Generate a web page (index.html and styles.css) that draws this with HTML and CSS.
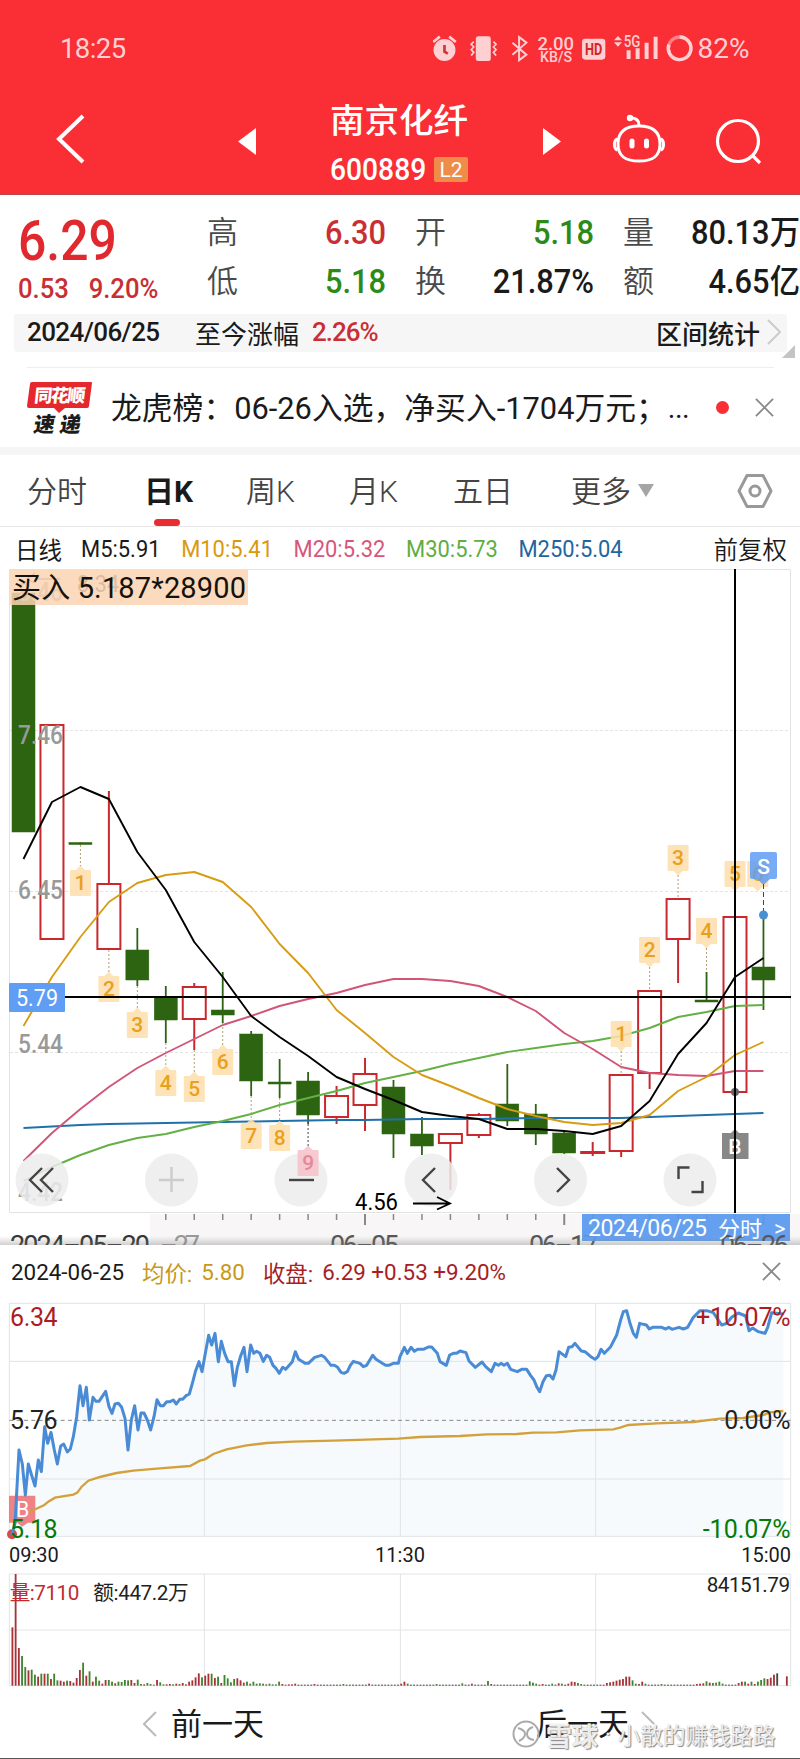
FILE: index.html
```
<!DOCTYPE html>
<html lang="zh-CN">
<head>
    <meta charset="UTF-8">
    <title>南京化纤 600889</title>
    <link rel="stylesheet" href="styles.css">
</head>
<body>
<div id="page">
    <div id="header">
        <div class="status">
            <span class="time">18:25</span>
            <svg class="status-icons" viewBox="100 95 960 100">
                <g fill="#ffd0d2" stroke="none">
                    <circle cx="134" cy="149" r="33"/>
                    <path d="M100 125l20-16M168 125l-20-16" stroke="#ffd0d2" stroke-width="8"/>
                    <path d="M134 134v20l10 6" stroke="#c23a40" stroke-width="8" fill="none"/>
                    <rect x="228" y="108" width="45" height="74" rx="7"/>
                    <path d="M222 124l-8 8 8 8-8 8 8 8-8 10M281 124l8 8-8 8 8 8-8 8 8 10" fill="none" stroke="#ffd0d2" stroke-width="5"/>
                    <path d="M338 127l42 36-22 17v-70l22 17-42 36" fill="none" stroke="#ffd0d2" stroke-width="6"/>
                    <text x="413" y="148" font-size="55" font-weight="500" textLength="110" lengthAdjust="spacingAndGlyphs">2.00</text>
                    <text x="421" y="186" font-size="45" font-weight="500" textLength="96" lengthAdjust="spacingAndGlyphs">KB/S</text>
                    <rect x="547" y="115" width="70" height="63" rx="10"/>
                    <text x="556" y="163" font-size="48" font-weight="700" fill="#d3262c" textLength="52" lengthAdjust="spacingAndGlyphs">HD</text>
                    <path d="M643 120l12-13 12 13zM643 126l12 13 12-13z"/>
                    <text x="672" y="139" font-size="47" font-weight="500" textLength="50" lengthAdjust="spacingAndGlyphs">5G</text>
                    <path d="M681 150h12v26h-12zM708 144h12v32h-12zM735 127h12v49h-12zM762 109h12v67h-12z"/>
                    <circle cx="840" cy="144" r="34" fill="none" stroke="#ff8187" stroke-width="10"/>
                    <path d="M840 110a34 34 0 1 1-32 23" fill="none" stroke="#ffd0d2" stroke-width="10"/>
                    <text x="894" y="174" font-size="83" textLength="156" lengthAdjust="spacingAndGlyphs">82%</text>
                </g>
            </svg>
        </div>
        <div class="nav">
            <svg class="back" viewBox="0 0 30 50"><path d="M27 2L3 25l24 23"/></svg>
            <svg class="prev" viewBox="0 0 18 27"><path d="M18 0v27L0 13.500z"/></svg>
            <div class="title">
                <div class="name">南京化纤</div>
                <div class="code"><span>600889</span><span class="l2">L2</span></div>
            </div>
            <svg class="next" viewBox="0 0 18 27"><path d="M0 0v27l18-13.500z"/></svg>
            <svg class="robot" viewBox="0 0 54 50">
                <path d="M27 12c13 0 21 5 21 18s-8 17-21 17S6 43 6 30s8-18 21-18z"/>
                <path d="M5.500 25c-4 1-4 10 0 11M48.500 25c4 1 4 10 0 11M27 11c0-5-3-7-8-7"/>
                <path d="M20 27v5M34.500 27v5" class="eye"/>
                <circle cx="18" cy="4" r="3.200" fill="#fff" stroke="none"/>
            </svg>
            <svg class="search" viewBox="0 0 48 48"><circle cx="23" cy="23" r="20.500"/><path d="M37 37l8 8"/></svg>
        </div>
    </div>

    <div id="quote">
        <div class="last">
            <div class="price">6.29</div>
            <div class="change"><span>0.53</span><span>9.20%</span></div>
        </div>
        <div class="stats">
            <span>高</span><b class="up">6.30</b><span>开</span><b class="down">5.18</b><span>量</span><b>80.13<i>万</i></b>
            <span>低</span><b class="down">5.18</b><span>换</span><b>21.87%</b><span>额</span><b>4.65<i>亿</i></b>
        </div>
    </div>

    <div id="range">
        <span class="date">2024/06/25</span>
        <span class="label">至今涨幅</span>
        <span class="rate">2.26%</span>
        <span class="count">区间统计</span>
        <svg class="more" viewBox="0 0 14 26"><path d="M1 1l12 12L1 25"/></svg>
        <i class="corner"></i>
    </div>

    <div id="news">
        <svg class="logo" viewBox="0 0 66 56">
            <path d="M5 2h59q1 0 1 1l-3 23q0 2-2 2H38l-6 5-5-5H2q-2 0-2-2L3 4q0-2 2-2z" fill="#e5282e"/>
            <text x="7" y="22" fill="#fff" font-size="18" font-weight="900" textLength="51" transform="skewX(-6) translate(2 0)">同花顺</text>
            <text x="7" y="52" fill="#1c1c1c" font-size="21" font-weight="900" textLength="47" transform="skewX(-10) translate(8 0)">速递</text>
        </svg>
        <p>龙虎榜：06-26入选，净买入-1704万元；</p>
        <span class="dots">...</span>
        <i class="dot"></i>
        <svg class="close" viewBox="0 0 20 20"><path d="M1 1l18 18M19 1L1 19"/></svg>
    </div>

    <ul id="tabs">
        <li>分时</li>
        <li class="selected">日K</li>
        <li>周K</li>
        <li>月K</li>
        <li>五日</li>
        <li>更多<i></i></li>
        <li class="setting"><svg viewBox="0 0 36 36"><path d="M10 2.500h16l8 15.500-8 15.500H10L2 18z"/><circle cx="18" cy="18" r="5"/></svg></li>
    </ul>

    <div id="ma">
        <span class="cn">日线</span>
        <div class="values">
            <span>M5:5.91</span>
            <span class="m10">M10:5.41</span>
            <span class="m20">M20:5.32</span>
            <span class="m30">M30:5.73</span>
            <span class="m250">M250:5.04</span>
        </div>
        <span class="cn fq">前复权</span>
    </div>

    <svg id="kline" viewBox="0 569 800 676">
        <defs>
            <linearGradient id="shade" x1="0" y1="0" x2="0" y2="1">
                <stop offset="0" stop-color="#888" stop-opacity="0"/>
                <stop offset="1" stop-color="#777" stop-opacity=".35"/>
            </linearGradient>
        </defs>
        <rect x="150" y="1214" width="650" height="31" fill="#f8f6f6"/>
        <path class="frame" d="M9.500 570V1212.500H790.500V570M9.500 569.500H790.500"/>
        <path class="grid" d="M10 730.500H790M10 891.500H790M10 1052.500H790"/>
        <g id="candles"></g>
        <g id="lines"></g>
        <g class="axis">
            <text x="18" y="601" textLength="45" lengthAdjust="spacingAndGlyphs">8.46</text>
            <text x="18" y="744" textLength="45" lengthAdjust="spacingAndGlyphs">7.46</text>
            <text x="18" y="899" textLength="45" lengthAdjust="spacingAndGlyphs">6.45</text>
            <text x="18" y="1053" textLength="45" lengthAdjust="spacingAndGlyphs">5.44</text>
            <text x="18" y="1201" textLength="45" lengthAdjust="spacingAndGlyphs">4.42</text>
        </g>
        <text x="77" y="592" font-size="23" fill="#333" textLength="42" lengthAdjust="spacingAndGlyphs">8.34</text>
        <path d="M60 579H35M35 573l-8 6 8 4" stroke="#333" fill="none"/>
        <!-- 操作按钮 -->
        <g class="btn">
            <circle cx="42" cy="1180" r="26.500"/><circle cx="171.500" cy="1180" r="26.500"/><circle cx="301" cy="1180" r="26.500"/>
            <circle cx="431" cy="1180" r="26.500"/><circle cx="560.500" cy="1180" r="26.500"/><circle cx="690" cy="1180" r="26.500"/>
            <path d="M42 1168l-12 12 12 12M53 1168l-12 12 12 12"/>
            <path class="off" d="M159 1180h25M171.500 1167v25"/>
            <path d="M289 1180h25"/>
            <path d="M435 1168l-12 12 12 12M557 1168l12 12-12 12"/>
            <path d="M678.500 1179v-11.500h11M702.500 1181v11h-11"/>
        </g>
        <g id="badges"></g>
        <!-- 买卖点 -->
        <rect x="750" y="852" width="27" height="27" rx="2" fill="#5f9cf3" opacity=".85"/>
        <path d="M757 879h13l-6.500 6z" fill="#5f9cf3" opacity=".85"/>
        <text x="763.500" y="873.500" class="mark">S</text>
        <path d="M763.500 884v27" stroke="#444" stroke-dasharray="5 3"/>
        <circle cx="763.500" cy="915" r="4.500" fill="#4a90d0"/>
        <path d="M722 1133h9l4-4 4 4h9.500v26H722z" fill="#7b7b7b" opacity=".9"/>
        <text x="735" y="1154" class="mark">B</text>
        <circle cx="735" cy="1092" r="4" fill="#666"/>
        <!-- 十字光标 -->
        <path d="M65 997H791M735 569V1213" stroke="#000" stroke-width="2"/>
        <rect x="9" y="983" width="56" height="29" rx="1" fill="#609df4"/>
        <text x="16" y="1006" font-size="24" fill="#fff" textLength="42" lengthAdjust="spacingAndGlyphs">5.79</text>
        <rect x="10" y="570" width="238" height="35" fill="#fad4b3" opacity=".85"/>
        <text x="12" y="598" font-size="29" fill="#15110c" textLength="234">买入 5.187*28900</text>
        <text x="355" y="1210" font-size="23" fill="#000" textLength="43" lengthAdjust="spacingAndGlyphs">4.56</text>
        <path d="M413 1203.500h37M437 1197l13 6.500-13 6" stroke="#000" stroke-width="1.800" fill="none"/>
        <g id="ticks"></g>
        <g class="days">
            <text x="10" y="1255" textLength="140" fill="#333">2024–05–20</text>
            <text x="160" y="1255" textLength="40" class="faint">–27</text>
            <text x="330" y="1255" textLength="69">06–05</text>
            <text x="529" y="1255" textLength="69">06–17</text>
        </g>
        <rect x="582" y="1214" width="208" height="27" fill="#5b9aef" opacity=".94"/>
        <g class="days"><text x="720" y="1255" textLength="69">06–26</text></g>
        <text x="588" y="1236" font-size="23" fill="#fff" textLength="119">2024/06/25</text>
        <text x="718" y="1237" font-size="22" fill="#fff">分时</text>
        <text x="774" y="1236" font-size="22" fill="#fff">&gt;</text>
        <rect x="0" y="1236" width="800" height="9" fill="url(#shade)"/>
    </svg>

    <div id="dayinfo">
        <span>2024-06-25</span>
        <span class="avg">均价:</span><span class="avg num">5.80</span>
        <span class="close-price">收盘:</span><span class="close-price num">6.29 +0.53 +9.20%</span>
        <svg class="close" viewBox="0 0 20 20"><path d="M1 1l18 18M19 1L1 19"/></svg>
    </div>

    <svg id="minute" viewBox="0 180 2400 735">
        <path id="area" fill="#f6fafd"/>
        <path class="frame" d="M28 190H2372V889H28zM28 364H2372M28 717H2372M613 190V889M1201 190V889M1787 190V889"/>
        <path d="M28 541H2372" stroke="#888" stroke-width="3" stroke-dasharray="12 10"/>
        <path d="M27 769q0-2 2-2h75q2 0 2 2v79H84l-18 12-14-12H27z" fill="#ee6468" opacity=".8"/>
        <text x="48" y="832" font-size="64" fill="#fff">B</text>
        <circle cx="36" cy="883" r="15" fill="#d94b50"/>
        <polyline id="avgline" fill="none" stroke="#d3a03a" stroke-width="7" points="88,816 133,795 145,785 165,773 220,764 232,758 245,740 265,722 300,711 350,699 400,692 480,685 570,678 600,662 615,658 640,642 680,628 740,616 800,609 880,605 1000,602 1195,596 1260,591 1380,588 1460,583 1550,582 1600,578 1670,577 1740,571 1840,568 1860,563 1885,555 1970,550 2080,546 2160,536 2230,534 2290,525 2310,517 2350,513"/>
        <polyline id="priceline" fill="none" stroke="#4a8bd6" stroke-width="9" stroke-linejoin="round" points="35,885 45,850 57,630 67,672 76,765 85,672 95,706 105,738 115,660 124,695 134,560 143,610 153,577 163,630 172,672 182,618 191,612 202,636 211,627 220,590 230,530 240,437 249,497 259,442 268,540 279,472 288,484 297,484 317,454 327,500 336,520 345,492 355,490 365,502 375,535 384,630 394,540 404,497 414,570 423,519 432,519 442,540 452,570 462,530 471,479 481,497 490,497 500,485 510,485 520,480 529,492 539,478 548,478 558,467 568,462 577,430 587,392 597,365 606,395 616,340 626,286 635,315 645,280 655,365 664,304 674,340 684,365 694,365 703,437 712,382 722,348 732,322 741,395 752,315 761,340 770,334 780,340 790,364 800,346 809,352 819,376 828,385 838,400 848,382 857,388 877,365 886,335 896,358 915,370 925,370 944,352 964,346 974,352 993,376 1003,376 1013,382 1023,397 1032,400 1042,395 1051,376 1060,364 1080,370 1090,380 1100,376 1118,346 1128,358 1147,370 1157,376 1166,376 1180,370 1195,370 1200,350 1213,322 1222,340 1233,322 1243,334 1253,328 1270,328 1285,321 1295,321 1312,340 1320,365 1339,376 1349,345 1360,340 1370,340 1380,333 1398,338 1407,363 1426,382 1446,366 1457,380 1474,395 1485,370 1495,376 1503,370 1512,376 1522,370 1532,388 1552,395 1565,388 1580,388 1592,407 1602,420 1611,442 1619,455 1629,425 1639,407 1650,406 1659,417 1668,390 1677,335 1697,350 1706,322 1716,320 1725,310 1744,333 1755,335 1775,352 1785,358 1794,350 1803,328 1813,340 1832,320 1850,285 1862,240 1870,215 1880,212 1890,250 1900,280 1909,292 1919,250 1930,253 1939,255 1948,267 1958,262 1985,262 1997,267 2006,262 2016,268 2037,262 2050,267 2063,262 2080,232 2100,212 2120,212 2140,218 2165,255 2180,250 2195,232 2215,219 2237,228 2247,272 2258,264 2275,275 2295,280 2303,262 2315,218 2350,222"/>
        <g font-size="75">
            <text x="30" y="258" fill="#ae1c22" textLength="143">6.34</text>
            <text x="30" y="566" fill="#222" textLength="143">5.76</text>
            <text x="30" y="895" fill="#067a06" textLength="143">5.18</text>
            <text x="2088" y="258" fill="#ae1c22" textLength="284">+10.07%</text>
            <text x="2173" y="566" fill="#222" textLength="199">0.00%</text>
            <text x="2108" y="895" fill="#067a06" textLength="264">-10.07%</text>
        </g>
    </svg>

    <div id="times"><span>09:30</span><span>11:30</span><span>15:00</span></div>

    <svg id="volume" viewBox="0 40 2400 342">
        <path class="frame" d="M28 43H2372V378H28zM28 211H2372M613 43V378M1201 43V378M1787 43V378"/>
        <g id="bars"></g>
        <g font-size="62">
            <text x="29" y="120" fill="#c02a30" textLength="209">量:7110</text>
            <text x="280" y="120" fill="#222" textLength="286">额:447.2万</text>
            <text x="2120" y="98" fill="#222" textLength="250">84151.79</text>
        </g>
    </svg>

    <div id="pager">
        <svg viewBox="0 0 14 26"><path d="M13 1L1 13l12 12"/></svg>
        <span>前一天</span>
        <span class="after">后一天</span>
        <svg viewBox="0 0 14 26"><path d="M1 1l12 12"/></svg>
        <div class="watermark">
            <svg viewBox="0 0 28 28"><circle cx="14" cy="14" r="12.500"/><path d="M6 8q7 2 7 6t-6 7M21 7q-6 2-6 7t7 6"/></svg>
            <b>雪球</b><em>·</em><span>小散的赚钱路路</span>
        </div>
    </div>
</div>
<script>
    function px(i){
        return 23.5+i*28.46;
    }
    // 涨跌, 实体上, 实体下, 影线上, 影线下
    var aCandle=[
        ['g',593,832,593,832],['r',725,939,725,939],['g',842.5,844.5,843,844],['r',884,949,791,949],
        ['g',950,980,928,986],['g',998,1020,986,1043],['r',987,1019,983,1050],['g',1010,1015,972,1023],
        ['g',1034,1081,1031,1096],['g',1082,1084,1059,1098],['g',1081,1115,1072,1124],['r',1096,1117,1086,1124],
        ['r',1074,1105,1058,1131],['g',1087,1134,1080,1158],['g',1134,1146,1117,1155],['r',1134,1143,1134,1190],
        ['r',1115,1135,1113,1138],['g',1104,1121,1064,1126],['g',1114,1134,1104,1145],['g',1133,1153,1130,1154],
        ['r',1152,1153,1142,1156],['r',1075,1151,1075,1157],['r',991,1073,991,1089],['r',899,939,899,983],
        ['g',1000,1002,972,1001],['r',917,1092,917,1092],['g',967,980,915,1010]
    ];
    var str='';
    for(var i=0;i<aCandle.length;i++){
        var c=aCandle[i],x=px(i);
        var cls=c[0]=='r'?'rise':'fall';
        str+='<path class="'+cls+'" d="M'+x+' '+c[3]+'V'+c[1]+'M'+x+' '+c[2]+'V'+c[4]+'"/>';
        str+='<rect class="'+cls+'" x="'+(x-11.5)+'" y="'+c[1]+'" width="23" height="'+(c[2]-c[1])+'"/>';
    }
    document.getElementById('candles').innerHTML=str;

    var oLine={
        '#2071a8':[1128,1126.5,1125,1124,1123.5,1123,1122.5,1122,1121.5,1121,1120.5,1120,1120,1119.5,1119,1119,1119,1118.5,1118,1118,1118,1118,1117,1116,1115,1114,1113],
        '#65b045':[1181,1167,1155,1145,1138,1134,1127,1121,1114,1105,1098,1091,1083,1077,1071,1064,1058,1052,1048,1044,1041,1036,1028,1017,1012,1006,1005],
        '#d15577':[1161,1133,1109,1087,1068,1053,1039,1025,1016,1006,999,993,985,979,979,981,986,997,1011,1033,1049,1067,1073,1075,1076,1071,1071],
        '#d79c12':[1026,977,937,902,883,875,872,882,907,944,973,1010,1033,1057,1075,1086,1098,1109,1116,1122,1125,1123,1115,1091,1077,1055,1042],
        '#000':[859,802,787,799,852,890,942,977,1016,1037,1056,1077,1089,1100,1112,1116,1119,1129,1129,1131,1134,1126,1101,1054,1023,977,958]
    };
    str='';
    for(var color in oLine){
        var pts=[];
        for(var i=0;i<27;i++){
            pts.push(px(i)+','+oLine[color][i]);
        }
        str+='<polyline stroke="'+color+'" points="'+pts.join(' ')+'"/>';
    }
    document.getElementById('lines').innerHTML=str;

    // 九转序列: 第几根, 数字, 顶部y, 虚线起点, 虚线终点
    var aBadge=[
        [2,1,867,845,867],[3,2,973,950,973],[4,3,1009,986,1009],[5,4,1067,1043,1067],[6,5,1073,1050,1073],[7,6,1046,1023,1046],
        [8,7,1120,1096,1120],[9,8,1122,1098,1122],[10,9,1147,1124,1147],
        [21,1,1022,1051,1075],[22,2,938,967,991],[23,3,846,875,899],[24,4,919,948,972],[25,5,862,889,917],[25.8,6,862,862,862]
    ];
    str='';
    for(var i=0;i<aBadge.length;i++){
        var b=aBadge[i],x=px(b[0]),y=b[2],up=b[0]<20;
        var pink=b[1]==9;
        var bg=pink?'#f6c3cb':'#fde0ae';
        str+='<path d="M'+x+' '+b[3]+'V'+b[4]+'" stroke="'+(pink?'#444':'#b3a070')+'" stroke-dasharray="2 2"/>';
        str+='<path d="'+(up?'M'+x+' '+y+'l4 4h5.500v24h-19v-24h5.500z':'M'+x+' '+(y+28)+'l4-4h5.500v-24h-19v24h5.500z')+'" fill="'+bg+'" stroke="'+bg+'" stroke-width="2" stroke-linejoin="round" opacity=".88"/>';
        str+='<text x="'+x+'" y="'+(y+(up?23:19))+'" fill="'+(pink?'#e88797':'#eba01b')+'">'+b[1]+'</text>';
    }
    document.getElementById('badges').innerHTML=str;

    str='';
    for(var i=5;i<27;i++){
        var big=(i-12)%7==0&&i>5;
        str+='<path d="M'+px(i)+' 1214V'+(big?1225:1220)+'" stroke="#888" stroke-width="'+(big?2:1.5)+'"/>';
    }
    document.getElementById('ticks').innerHTML=str;

    document.getElementById('area').setAttribute('d','M'+document.getElementById('priceline').getAttribute('points')+' 2350,889 35,889z');

    // 分时成交量
    var sVol='r175 r335 r113 g89 g56 r46 g48 g33 r27 g36 r36 g36 r20 g36 g16 r15 r12 g15 r14 r9 r23 r47 g69 r30 g43 r12 g27 g15 r6 r17 g17 g12 r7 g12 g11 g17 g16 r17 r8 g18 g5 r4 g8 g5 g3 r17 g10 g4 r4 r5 g4 r6 g5 r8 r4 r12 r16 r25 r37 g25 r30 r36 g36 r23 g27 r8 g32 g22 g10 g20 r22 r16 r9 g12 g6 g12 g6 g7 g6 r4 g6 g4 g4 g12 r5 r3 r4 r4 r6';
    var aVol=sVol.split(' ');
    var oVol={94:'r5',103:'g5',111:'r6',121:'r6',122:'r12',123:'g6',132:'g5',140:'g7',143:'r6',148:'g14',149:'r5',161:'g13',162:'g9',163:'g6',165:'r5',168:'g6',170:'r7',171:'g6',173:'r6',174:'r12',175:'r11',176:'g8',177:'g5',185:'r8',186:'r10',187:'r12',188:'r15',189:'r18',190:'r20',191:'r27',192:'r27',193:'g16',194:'g6',195:'r5',196:'r12',197:'g6',202:'g5',213:'r5',214:'r6',215:'r7',216:'g13',217:'r9',218:'g8',219:'g9',220:'g12',221:'g6',226:'r8',227:'r12',228:'g12',229:'r6',230:'g12',231:'r5',232:'g12',233:'g17',234:'g22',235:'r20',236:'r24',237:'r33',238:'k37',241:'r28'};
    str='';
    for(var i=0;i<242;i++){
        var v=aVol[i]||oVol[i]||(i>238?'k0':'k3');
        var h=v.substr(1);
        var f={r:'#a83238',g:'#3f8430',k:'#444'}[v.charAt(0)];
        str+='<rect x="'+(34.5+i*9.64)+'" y="'+(378-h)+'" width="5.500" height="'+h+'" fill="'+f+'"/>';
    }
    document.getElementById('bars').innerHTML=str;
</script>
</body>
</html>
```
FILE: styles.css
```
*{
    margin: 0;
    padding: 0;
    box-sizing: border-box;
}
body{
    background: #fff;
    font-family: Roboto,"Noto Sans CJK SC",sans-serif;
    color: #1a1a1a;
}
ul{
    list-style: none;
}
i,em{
    font-style: normal;
}
svg{
    display: block;
    flex: none;
}
span,b,p,li{
    white-space: nowrap;
}
#page{
    width: 800px;
    height: 1759px;
    overflow: hidden;
    border-bottom: 1px solid #555;
}
/* 顶部 */
#header{
    height: 195px;
    background: #fa2e35;
    border-bottom: 1px solid #b8464c;
    color: #fff;
}
.status{
    display: flex;
    align-items: center;
    height: 97px;
    padding: 0 47px 0 60px;
    justify-content: space-between;
}
.status .time{
    font-size: 27.5px;
    letter-spacing: -.6px;
    color: #ffd0d2;
}
.status-icons{
    width: 320px;
    height: 33.3px;
}
.nav{
    display: flex;
    height: 97px;
    padding-left: 56px;
    fill: none;
    stroke: #fff;
    stroke-width: 4;
}
.back{
    width: 30px;
    height: 50px;
    margin-top: 17px;
}
.prev,.next{
    width: 18px;
    height: 27px;
    margin-top: 31px;
    fill: #fff;
    stroke: none;
}
.prev{
    margin-left: 152px;
}
.title{
    width: 140px;
    margin-left: 74px;
}
.name{
    height: 46px;
    line-height: 48px;
    font-size: 34.5px;
    font-weight: 500;
    white-space: nowrap;
}
.code{
    display: flex;
    align-items: center;
    height: 32px;
    margin-top: 10px;
    font-size: 31px;
    font-weight: 500;
}
.code span:first-child{
    width: 94px;
    transform: scaleX(.91);
    transform-origin: left;
}
.code .l2{
    width: 34px;
    height: 25px;
    margin-left: 10px;
    line-height: 26px;
    background: #ee8c48;
    border-radius: 2px;
    font-size: 21px;
    font-weight: 400;
    text-align: center;
}
.next{
    margin-left: 73px;
}
.robot{
    width: 54px;
    height: 50px;
    margin: 17px 0 0 51px;
    stroke-width: 3;
}
.robot .eye{
    stroke-width: 5;
    stroke-linecap: round;
}
.search{
    width: 48px;
    height: 48px;
    margin: 21px 0 0 49px;
    stroke-width: 3.200;
}
/* 报价 */
#quote{
    display: flex;
    height: 119px;
}
.last{
    width: 207px;
    padding: 18px 0 0 18px;
    color: #e0292f;
}
.price{
    height: 56px;
    line-height: 56px;
    font-size: 56px;
    font-weight: 500;
    transform: scaleX(.89);
    transform-origin: left;
}
.change{
    display: flex;
    gap: 22px;
    height: 30px;
    margin-top: 5px;
    line-height: 30px;
    font-size: 28.5px;
    font-weight: 500;
    color: #c92e33;
    transform: scaleX(.9);
    transform-origin: left;
}
.stats{
    display: grid;
    grid-template-columns: 31px 148px 60px 148px 60px 146px;
    grid-template-rows: 49px 49px;
    padding-top: 13px;
    line-height: 49px;
}
.stats span{
    font-size: 31px;
    font-weight: 350;
    color: #4a4a4a;
    text-align: right;
}
.stats b{
    font-size: 33.5px;
    font-weight: 500;
    text-align: right;
    transform: scaleX(.92);
    transform-origin: right;
}
.stats i{
    font-size: 33px;
}
.stats .up{
    color: #c92e33;
}
.stats .down{
    color: #2c8a16;
}
#range{
    position: relative;
    display: flex;
    align-items: center;
    height: 38px;
    margin: 0 13px 0 14px;
    padding: 0 0 2px 13px;
    background: #f6f6f6;
    border-radius: 3px;
    font-size: 26px;
    letter-spacing: -.6px;
}
#range .date{
    width: 168px;
    font-weight: 500;
}
#range .label{
    width: 117px;
    letter-spacing: 0;
}
#range .rate{
    color: #c92e33;
    font-weight: 500;
    letter-spacing: -1px;
}
#range .count{
    margin-left: auto;
    font-weight: 500;
    letter-spacing: 0;
}
.more{
    width: 14px;
    height: 26px;
    margin: 0 6px 0 7px;
    fill: none;
    stroke: #ccc;
    stroke-width: 2;
}
.corner{
    position: absolute;
    right: -8px;
    bottom: -6px;
    border-left: 13px solid transparent;
    border-bottom: 13px solid #c4c4c4;
}
#news{
    display: flex;
    align-items: center;
    height: 80px;
    margin: 15px 26px 0 27px;
    border-top: 1px solid #eee;
}
.logo{
    width: 66px;
    height: 56px;
}
#news p{
    margin: -5px 0 0 18px;
    font-size: 30.800px;
}
.dots{
    margin-left: 1px;
    font-size: 29px;
    letter-spacing: -.6px;
}
.dot{
    width: 13px;
    height: 13px;
    margin-left: auto;
    border-radius: 50%;
    background: #fa2e35;
}
.close{
    width: 19px;
    height: 19px;
    fill: none;
    stroke: #8a8a8a;
    stroke-width: 2;
}
#news .close{
    margin-left: 26px;
}
/* 周期 */
#tabs{
    display: flex;
    height: 80px;
    border-top: 8px solid #f5f5f5;
    border-bottom: 1px solid #e8e8e8;
    line-height: 74px;
    font-size: 30px;
    font-weight: 350;
    color: #444;
    padding-left: 27px;
}
#tabs li{
    position: relative;
    width: 104px;
}
#tabs li:nth-child(1){
    width: 117px;
}
#tabs li:nth-child(2){
    width: 102px;
}
#tabs li:nth-child(5){
    width: 118px;
}
#tabs li:nth-child(3){
    width: 103px;
}
#tabs .selected{
    font-weight: 700;
    color: #1a1a1a;
}
#tabs .selected:after{
    content: "";
    position: absolute;
    left: 10px;
    bottom: 0;
    width: 26px;
    height: 7px;
    border-radius: 4px;
    background: #e82c32;
}
#tabs i{
    display: inline-block;
    margin-left: 7px;
    vertical-align: 5px;
    border: 8px solid transparent;
    border-top: 13px solid #a5a5a5;
    border-bottom: 0;
}
#tabs .setting{
    width: auto;
    margin-left: 62px;
}
.setting svg{
    width: 36px;
    height: 36px;
    margin-top: 18px;
    fill: none;
    stroke: #999;
    stroke-width: 3;
    stroke-linejoin: round;
}
#ma{
    display: flex;
    align-items: center;
    height: 42px;
    padding: 1px 13px 0 15px;
    font-size: 24.500px;
}
#ma .cn{
    font-size: 23.500px;
}
#ma .values{
    display: flex;
    gap: 23px;
    width: 560px;
    margin-left: 19px;
    transform: scaleX(.895);
    transform-origin: left;
}
#ma .fq{
    margin-left: auto;
    font-weight: 350;
    font-size: 24.500px;
}
.m10{
    color: #d99a10;
}
.m20{
    color: #d8567c;
}
.m30{
    color: #62ad3f;
}
.m250{
    color: #1f669e;
}
/* K线 */
#kline{
    width: 800px;
    height: 676px;
}
.frame{
    fill: none;
    stroke: #e2e2e2;
}
.grid{
    stroke: #e4e4e4;
    stroke-dasharray: 3 2;
}
#candles .fall{
    fill: #2d6411;
    stroke: #2d6411;
}
#candles path.fall{
    stroke-width: 1.800;
}
#candles rect.fall{
    stroke-width: .5;
}
#candles .rise{
    fill: none;
    stroke: #c9292e;
    stroke-width: 2;
}
#lines polyline{
    fill: none;
    stroke-width: 1.900;
    stroke-linejoin: round;
}
.axis{
    font-size: 26px;
    fill: #999;
    font-weight: 500;
}
#badges text,.mark{
    font-size: 21px;
    font-weight: 500;
    text-anchor: middle;
}
.mark{
    fill: #fff;
}
.btn circle{
    fill: #ececec;
    opacity: .85;
}
.btn path{
    fill: none;
    stroke: #444;
    stroke-width: 2.400;
}
.btn .off{
    stroke: #ccc;
}
.days{
    font-size: 27px;
    fill: #555;
}
.days .faint{
    fill: #999;
}
/* 分时 */
#dayinfo{
    display: flex;
    align-items: center;
    height: 55px;
    padding: 0 19px 2px 11px;
    font-size: 22.400px;
}
#dayinfo .avg{
    margin-left: 18px;
    color: #c9971a;
}
#dayinfo .close-price{
    margin-left: 18px;
    color: #a81e24;
}
#dayinfo .num{
    margin-left: 9px;
}
#dayinfo .close{
    margin-left: auto;
}
#minute{
    width: 800px;
    height: 245px;
}
#minute .frame,#volume .frame{
    stroke: #e0e4e6;
    stroke-width: 3;
}
#times{
    display: flex;
    justify-content: space-between;
    height: 28px;
    padding: 0 9px;
    line-height: 21px;
    font-size: 20px;
}
#volume{
    width: 800px;
    height: 114px;
}
#pager{
    position: relative;
    display: flex;
    align-items: center;
    height: 71px;
    padding: 2px 0 0 143px;
    font-size: 31px;
}
#pager svg{
    width: 14px;
    height: 26px;
    fill: none;
    stroke: #bbb;
    stroke-width: 2;
}
#pager>span{
    width: 93px;
    margin: -4px 0 0 14px;
}
#pager .after{
    margin: -4px 12px 0 272px;
}
.watermark{
    position: absolute;
    left: 512px;
    top: 31px;
    display: flex;
    align-items: center;
    height: 32px;
    font-size: 22.500px;
    color: rgba(255,255,255,.85);
    text-shadow: 1px 1px 1px #888,0 0 1px #aaa;
}
#pager .watermark svg{
    width: 28px;
    height: 28px;
    stroke: #aaa;
}
.watermark b{
    margin-left: 6px;
    font-size: 26px;
}
.watermark em{
    width: 20px;
    text-align: center;
}
```
